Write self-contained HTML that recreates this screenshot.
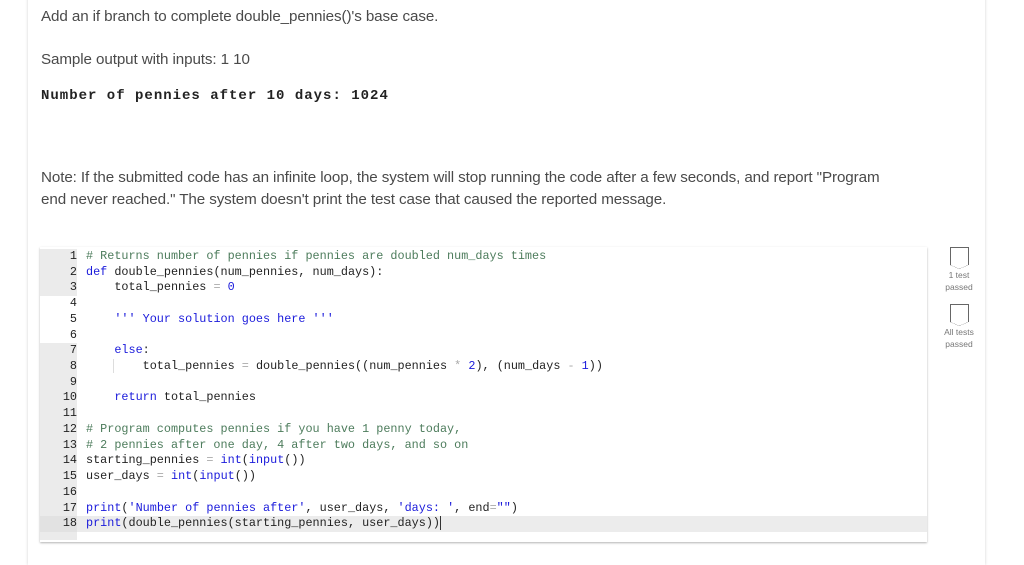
<!DOCTYPE html>
<html><head><meta charset="utf-8"><style>
body{margin:0;width:1024px;height:550px;background:#fff;overflow:hidden;position:relative;font-family:"Liberation Sans",sans-serif;}
.card{position:absolute;left:28px;top:-5px;width:957px;height:570px;background:#fff;box-shadow:0 0 3px rgba(0,0,0,.18);}
.t{position:absolute;left:41px;color:#4a4a4a;font-size:15.2px;white-space:nowrap;letter-spacing:-0.1px}
.mono{position:absolute;left:41px;top:88px;font-family:"Liberation Mono",monospace;font-weight:bold;font-size:14px;letter-spacing:1px;color:#222;white-space:pre}
.ed{position:absolute;left:40px;top:247px;width:887px;height:295px;background:#fff;box-shadow:0 1px 2px rgba(0,0,0,.3);}
.ln{font-family:"Liberation Mono",monospace;font-size:11.8px;line-height:15.72px;height:15.72px;white-space:pre;position:relative}
.num{position:absolute;left:0;width:37px;text-align:right;color:#222;}
.g{background:#ebebeb}
.code{position:absolute;left:46px;color:#222}
.c{color:#4d7c5c}.k{color:#1a1adb}.s{color:#1a1adb}.o{color:#aaa}
.lines{position:absolute;left:0;top:2px;width:887px}
.hl{background:#ececec}
.side{position:absolute;left:935px;width:48px;text-align:center;font-size:8.5px;color:#777;line-height:12px}
.box{width:17px;height:17px;border:1px solid #666;border-bottom:none;margin:0 auto 4px;position:relative}
.box:after{content:"";position:absolute;left:-1px;bottom:-4px;width:19px;height:4px;background:linear-gradient(to top right,transparent 48%,#666 50%,transparent 54%) left/50% 100% no-repeat,linear-gradient(to top left,transparent 48%,#666 50%,transparent 54%) right/50% 100% no-repeat}
</style></head><body>
<div class="card"></div>
<div class="t" style="top:8px">Add an if branch to complete double_pennies()'s base case.</div>
<div class="t" style="top:51px">Sample output with inputs: 1 10</div>
<div class="mono">Number of pennies after 10 days: 1024</div>
<div class="t" style="top:167px;line-height:22px">Note: If the submitted code has an infinite loop, the system will stop running the code after a few seconds, and report "Program<br>end never reached." The system doesn't print the test case that caused the reported message.</div>
<div class="ed">
<div class="lines">
<div class="ln"><span class="num g">1</span><span class="code"><span class="c"># Returns number of pennies if pennies are doubled num_days times</span></span></div>
<div class="ln"><span class="num g">2</span><span class="code"><span class="k">def</span> double_pennies(num_pennies, num_days):</span></div>
<div class="ln"><span class="num g">3</span><span class="code">    total_pennies <span class="o">=</span> <span class="k">0</span></span></div>
<div class="ln"><span class="num">4</span></div>
<div class="ln"><span class="num">5</span><span class="code">    <span class="s">''' Your solution goes here '''</span></span></div>
<div class="ln"><span class="num">6</span></div>
<div class="ln"><span class="num g">7</span><span class="code">    <span class="k">else</span>:</span></div>
<div class="ln"><span class="num g">8</span><span class="code">    <span style="border-left:1px solid #ddd;margin-left:-1px"></span>    total_pennies <span class="o">=</span> double_pennies((num_pennies <span class="o">*</span> <span class="k">2</span>), (num_days <span class="o">-</span> <span class="k">1</span>))</span></div>
<div class="ln"><span class="num g">9</span></div>
<div class="ln"><span class="num g">10</span><span class="code">    <span class="k">return</span> total_pennies</span></div>
<div class="ln"><span class="num g">11</span></div>
<div class="ln"><span class="num g">12</span><span class="code"><span class="c"># Program computes pennies if you have 1 penny today,</span></span></div>
<div class="ln"><span class="num g">13</span><span class="code"><span class="c"># 2 pennies after one day, 4 after two days, and so on</span></span></div>
<div class="ln"><span class="num g">14</span><span class="code">starting_pennies <span class="o">=</span> <span class="k">int</span>(<span class="k">input</span>())</span></div>
<div class="ln"><span class="num g">15</span><span class="code">user_days <span class="o">=</span> <span class="k">int</span>(<span class="k">input</span>())</span></div>
<div class="ln"><span class="num g">16</span></div>
<div class="ln"><span class="num g">17</span><span class="code"><span class="k">print</span>(<span class="s">'Number of pennies after'</span>, user_days, <span class="s">'days: '</span>, end<span class="o">=</span><span class="s">""</span>)</span></div>
<div class="ln hl"><span class="num g" style="background:#e2e2e2">18</span><span class="code"><span class="k">print</span>(double_pennies(starting_pennies, user_days))<span style="border-left:1px solid #333"></span></span></div>
<div class="ln" style="height:8px"><span class="num g" style="height:8px"></span></div>
</div>
</div>
<div class="side" style="top:247px"><div class="box"></div>1 test<br>passed</div>
<div class="side" style="top:304px"><div class="box"></div>All tests<br>passed</div>
</body></html>
